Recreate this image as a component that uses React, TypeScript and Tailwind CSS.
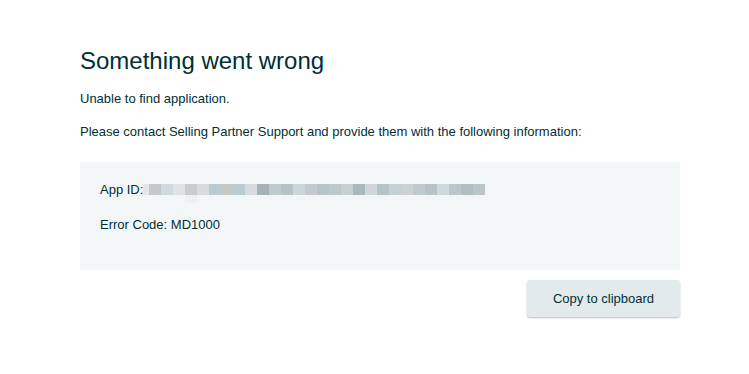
const blur = [
  "#c4c8ca", "#d0d9dc", "#dde3e4", "#c8ced0", "#d6dcdc", "#b9cbd0", "#c3c8c4",
  "#b9ccd1", "#d6dcdd", "#a6b3b6", "#bec9cc", "#b6c3c4", "#cdd5d8", "#c3c9ce", "#b5c5c7",
  "#bcc8ca", "#c9cfcc", "#a8b8bd", "#d0d6d8", "#b4c3c6", "#c6d0d3", "#ccd2d4", "#bfcacd",
  "#b7c4c7", "#d0d8da", "#bac6c9", "#b3bec1", "#b9c5c7",
];

export default function App() {
  return (
    <div
      className="w-[749px] h-[374px] bg-white text-[#002f36]"
      style={{ fontFamily: '"Liberation Sans", Arial, sans-serif' }}
    >
      <div className="w-[600px] ml-[80px] pt-[46px]">
        <h1 className="text-[24px] leading-[30px]">Something went wrong</h1>
        <p className="text-[13px] leading-[16px] mt-[15px]">Unable to find application.</p>
        <p className="text-[13px] leading-[16px] mt-[17px]">
          Please contact Selling Partner Support and provide them with the following information:
        </p>
        <div className="mt-[22px] bg-[#f3f6f7] h-[108px] px-[20px] pt-[20px] text-[13px] leading-[16px]">
          <div className="flex items-start">
            <span>App ID:</span>
            <div className="relative flex mt-[2px]">
              <div className="w-[6px] h-[11px] bg-[#e3e5e6]" />
              {blur.map((c, i) => (
                <div key={i} className="w-[12px] h-[11px]" style={{ background: c }} />
              ))}
              <div className="absolute left-[42px] top-[11px] w-[12px] h-[8px] bg-[#ecf0f1]" />
            </div>
          </div>
          <p className="mt-[19px]">Error Code: MD1000</p>
        </div>
        <div className="flex justify-end mt-[10px]">
          <button
            type="button"
            className="w-[153px] h-[37px] bg-[#e3eaeb] rounded-[3px] text-[13px] shadow-[0_1px_2px_rgba(0,0,0,0.25)]"
          >
            Copy to clipboard
          </button>
        </div>
      </div>
    </div>
  );
}
